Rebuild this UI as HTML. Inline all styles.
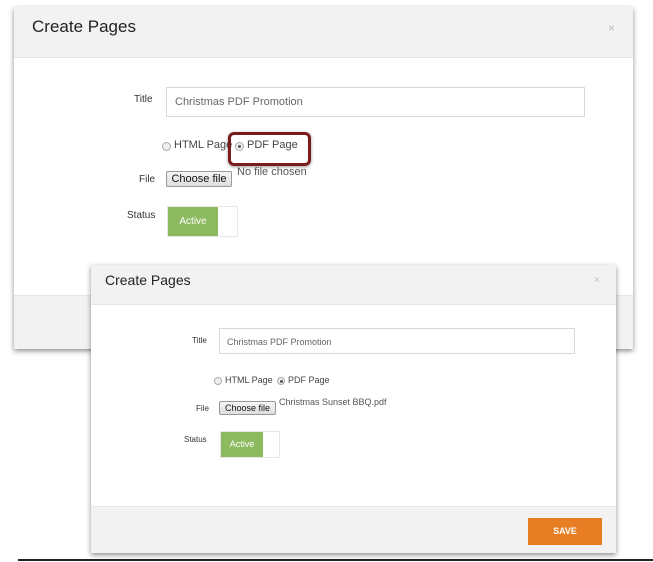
<!DOCTYPE html>
<html><head><style>
body{margin:0;width:653px;height:562px;background:#fff;position:relative;overflow:hidden;font-family:"Liberation Sans",sans-serif;color:#444}
.a{position:absolute}
.m{position:absolute;background:#fff;box-shadow:0 2px 5px rgba(0,0,0,.45)}
.hd{position:absolute;left:0;right:0;top:0;background:#f2f2f2;border-bottom:1px solid #e6e6e6}
.ft{position:absolute;left:0;right:0;bottom:0;background:#f2f2f2;border-top:1px solid #e6e6e6}
.inp{position:absolute;border:1px solid #d8d8d8;background:#fff;color:#666}
.btn{position:absolute;border:1px solid #999;background:linear-gradient(#f6f6f6,#ddd);color:#111;text-align:center;border-radius:2px}
.rad{position:absolute;border:1px solid #aaa;border-radius:50%;background:#eee}
</style></head><body>
<div class="m" style="left:14px;top:7px;width:619px;height:342px">
 <div class="hd" style="height:50px"></div>
 <div class="a" style="left:18px;top:10px;font-size:17px;color:#222">Create Pages</div>
 <div class="a" style="left:594px;top:14px;font-size:12px;color:#bbb">×</div>
 <div class="a" style="left:120px;top:87px;font-size:10px;color:#333">Title</div>
 <div class="inp" style="left:152px;top:80px;width:419px;height:30px;font-size:11px;line-height:28px;padding-left:8px;box-sizing:border-box">Christmas PDF Promotion</div>
 <div class="rad" style="left:148px;top:135px;width:7px;height:7px"></div>
 <div class="a" style="left:160px;top:132px;font-size:11px">HTML Page</div>
 <div class="rad" style="left:221px;top:135px;width:7px;height:7px"><div class="a" style="left:2px;top:2px;width:3px;height:3px;border-radius:50%;background:#555"></div></div>
 <div class="a" style="left:233px;top:132px;font-size:11px">PDF Page</div>
 <div class="a" style="left:214px;top:125px;width:77px;height:28px;border:3px solid #7a1c1c;border-radius:6px;box-shadow:0 1px 3px rgba(0,0,0,.4)"></div>
 <div class="a" style="left:125px;top:167px;font-size:10px;color:#333">File</div>
 <div class="btn" style="left:152px;top:164px;width:64px;height:14px;font-size:11px;line-height:14px">Choose file</div>
 <div class="a" style="left:223px;top:159px;font-size:11px;color:#555">No file chosen</div>
 <div class="a" style="left:113px;top:203px;font-size:10px;color:#333">Status</div>
 <div class="a" style="left:153px;top:199px;width:69px;height:29px;border:1px solid #e6e6e6"><div class="a" style="left:0;top:0;width:50px;height:29px;background:#8cba5f;color:#fff;font-size:10px;line-height:29px;text-align:center">Active</div></div>
 <div class="ft" style="height:53px"></div>
</div>
<div class="m" style="left:91px;top:265px;width:525px;height:288px">
 <div class="hd" style="height:39px"></div>
 <div class="a" style="left:14px;top:7px;font-size:14px;color:#222">Create Pages</div>
 <div class="a" style="left:503px;top:10px;font-size:10px;color:#bbb">×</div>
 <div class="a" style="left:101px;top:71px;font-size:8px;color:#333">Title</div>
 <div class="inp" style="left:128px;top:63px;width:356px;height:26px;font-size:9px;line-height:26px;padding-left:7px;box-sizing:border-box">Christmas PDF Promotion</div>
 <div class="rad" style="left:123px;top:112px;width:6px;height:6px"></div>
 <div class="a" style="left:134px;top:110px;font-size:9px">HTML Page</div>
 <div class="rad" style="left:186px;top:112px;width:6px;height:6px"><div class="a" style="left:1.5px;top:1.5px;width:3px;height:3px;border-radius:50%;background:#555"></div></div>
 <div class="a" style="left:197px;top:110px;font-size:9px">PDF Page</div>
 <div class="a" style="left:105px;top:139px;font-size:8px;color:#333">File</div>
 <div class="btn" style="left:128px;top:136px;width:55px;height:12px;font-size:9px;line-height:12px">Choose file</div>
 <div class="a" style="left:188px;top:132px;font-size:9px;color:#555">Christmas Sunset BBQ.pdf</div>
 <div class="a" style="left:93px;top:170px;font-size:8px;color:#333">Status</div>
 <div class="a" style="left:129px;top:166px;width:58px;height:25px;border:1px solid #e6e6e6"><div class="a" style="left:0;top:0;width:42px;height:25px;background:#8cba5f;color:#fff;font-size:9px;line-height:25px;text-align:center">Active</div></div>
 <div class="ft" style="height:46px"></div>
 <div class="a" style="left:437px;top:253px;width:74px;height:27px;background:#e87e24;color:#fff;font-size:9px;font-weight:bold;line-height:27px;text-align:center">SAVE</div>
</div>
<div class="a" style="left:18px;top:559px;width:635px;height:2px;background:#222"></div>
</body></html>
